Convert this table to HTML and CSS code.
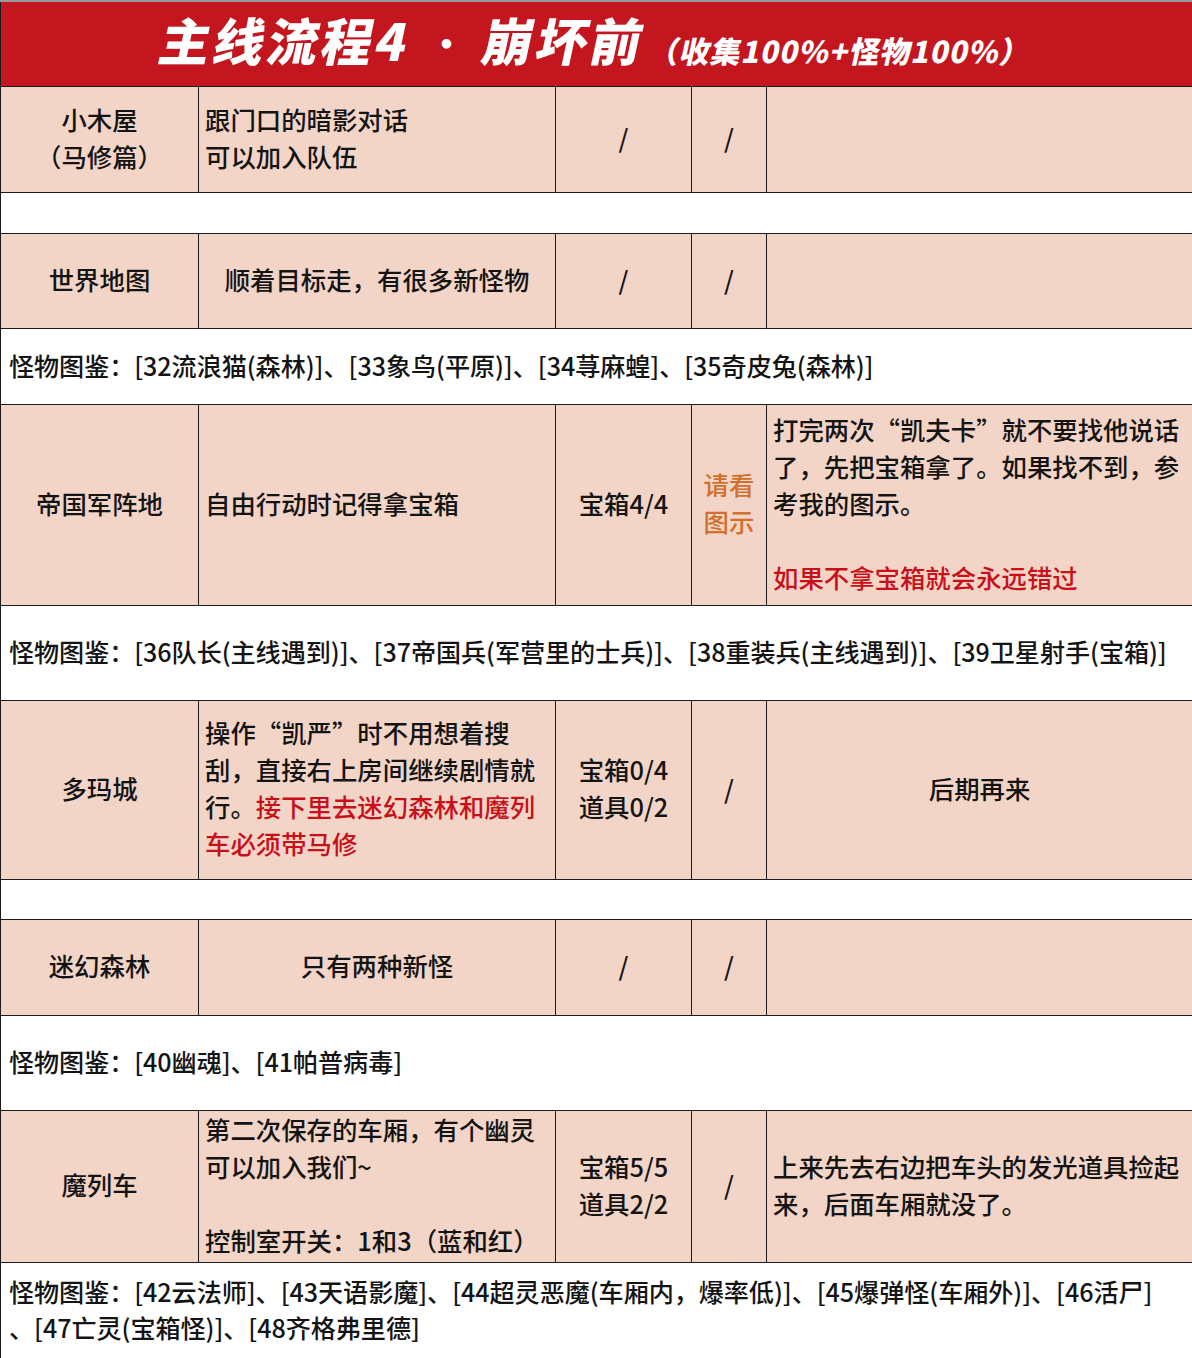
FILE: index.html
```html
<!DOCTYPE html>
<html lang="zh-CN">
<head>
<meta charset="utf-8">
<link rel="stylesheet" href="styles.css">
</head>
<body>
<table class="guide">
  <colgroup>
    <col class="c1"><col class="c2"><col class="c3"><col class="c4"><col class="c5">
  </colgroup>
  <tr class="h-head">
    <th colspan="5" class="head">
      <span class="title">主线流程4</span><span class="dot">·</span><span class="title">崩坏前</span><span class="sub">（收集100%+怪物100%）</span>
    </th>
  </tr>
  <tr class="h106 area">
    <td class="center">小木屋<br>（马修篇）</td>
    <td>跟门口的暗影对话<br>可以加入队伍</td>
    <td class="center">/</td>
    <td class="center">/</td>
    <td></td>
  </tr>
  <tr class="h41"><td colspan="5" class="blank"></td></tr>
  <tr class="h95 area">
    <td class="center">世界地图</td>
    <td class="center">顺着目标走，有很多新怪物</td>
    <td class="center">/</td>
    <td class="center">/</td>
    <td></td>
  </tr>
  <tr class="h76"><td colspan="5" class="mon">怪物图鉴：[32流浪猫(森林)]、[33象鸟(平原)]、[34荨麻蝗]、[35奇皮兔(森林)]</td></tr>
  <tr class="h201 area">
    <td class="center">帝国军阵地</td>
    <td>自由行动时记得拿宝箱</td>
    <td class="center">宝箱4/4</td>
    <td class="center orange">请看<br>图示</td>
    <td>打完两次“凯夫卡”就不要找他说话<br>了，先把宝箱拿了。如果找不到，参<br>考我的图示。<br><br><span class="red">如果不拿宝箱就会永远错过</span></td>
  </tr>
  <tr class="h95"><td colspan="5" class="mon">怪物图鉴：[36队长(主线遇到)]、[37帝国兵(军营里的士兵)]、[38重装兵(主线遇到)]、[39卫星射手(宝箱)]</td></tr>
  <tr class="h179 area">
    <td class="center">多玛城</td>
    <td>操作“凯严”时不用想着搜<br>刮，直接右上房间继续剧情就<br>行。<span class="red">接下里去迷幻森林和魔列<br>车必须带马修</span></td>
    <td class="center">宝箱0/4<br>道具0/2</td>
    <td class="center">/</td>
    <td class="center">后期再来</td>
  </tr>
  <tr class="h40"><td colspan="5" class="blank"></td></tr>
  <tr class="h96 area">
    <td class="center">迷幻森林</td>
    <td class="center">只有两种新怪</td>
    <td class="center">/</td>
    <td class="center">/</td>
    <td></td>
  </tr>
  <tr class="h95"><td colspan="5" class="mon">怪物图鉴：[40幽魂]、[41帕普病毒]</td></tr>
  <tr class="h151 area">
    <td class="center">魔列车</td>
    <td>第二次保存的车厢，有个幽灵<br>可以加入我们~<br><br>控制室开关：1和3（蓝和红）</td>
    <td class="center">宝箱5/5<br>道具2/2</td>
    <td class="center">/</td>
    <td>上来先去右边把车头的发光道具捡起<br>来，后面车厢就没了。</td>
  </tr>
  <tr class="h97"><td colspan="5" class="mon">怪物图鉴：[42云法师]、[43天语影魔]、[44超灵恶魔(车厢内，爆率低)]、[45爆弹怪(车厢外)]、[46活尸]<br>、[47亡灵(宝箱怪)]、[48齐格弗里德]</td></tr>
</table>
</body>
</html>
```

FILE: styles.css
```css
html, body {
  margin: 0;
  padding: 0;
  background: #ffffff;
}

.guide {
  width: 1192px;
  table-layout: fixed;
  border-collapse: collapse;
  font-family: "Noto Sans CJK SC", "Noto Sans", sans-serif;
  font-weight: 500;
  font-size: 25.4px;
  line-height: 37px;
  color: #141414;
}

.c1 { width: 198px; }
.c2 { width: 357px; }
.c3 { width: 136px; }
.c4 { width: 75px; }
.c5 { width: 426px; }

.guide td, .guide th {
  border: 1.5px solid #1c1c1c;
  padding: 0 6px 3px 6px;
  vertical-align: middle;
  text-align: left;
  box-sizing: border-box;
  overflow: hidden;
}

.guide tr.area td {
  background: #f2d5c7;
}

.guide td.center {
  text-align: center;
}

.guide td.blank {
  background: #ffffff;
}

.guide td.mon {
  background: #ffffff;
  padding-left: 8px;
  font-size: 25.1px;
  letter-spacing: -0.05px;
  line-height: 36px;
}

.h-head { height: 85px; }
.h106 { height: 106px; }
.h41 { height: 41px; }
.h95 { height: 95px; }
.h76 { height: 76px; }
.h201 { height: 201px; }
.h179 { height: 179px; }
.h40 { height: 40px; }
.h96 { height: 96px; }
.h151 { height: 151px; }
.h97 { height: 97px; }

.guide th.head {
  background: #c3161f;
  border-top: 2px solid #9a9a9a;
  text-align: center;
  padding: 0 0 6px 0;
  color: #ffffff;
  white-space: nowrap;
}

.title {
  display: inline-block;
  font-size: 51px;
  font-weight: 900;
  letter-spacing: 3px;
  line-height: 56px;
  transform: skewX(-12deg);
  vertical-align: baseline;
}

.dot {
  display: inline-block;
  font-size: 34px;
  font-weight: 900;
  margin: 0 20px 0 18px;
  vertical-align: 4px;
}

.sub {
  display: inline-block;
  font-size: 30px;
  font-weight: 900;
  letter-spacing: 1px;
  line-height: 40px;
  transform: skewX(-12deg);
  margin-left: 4px;
  vertical-align: -2px;
}

.red {
  color: #c8101a;
}

.orange {
  color: #d0702c;
}
```
